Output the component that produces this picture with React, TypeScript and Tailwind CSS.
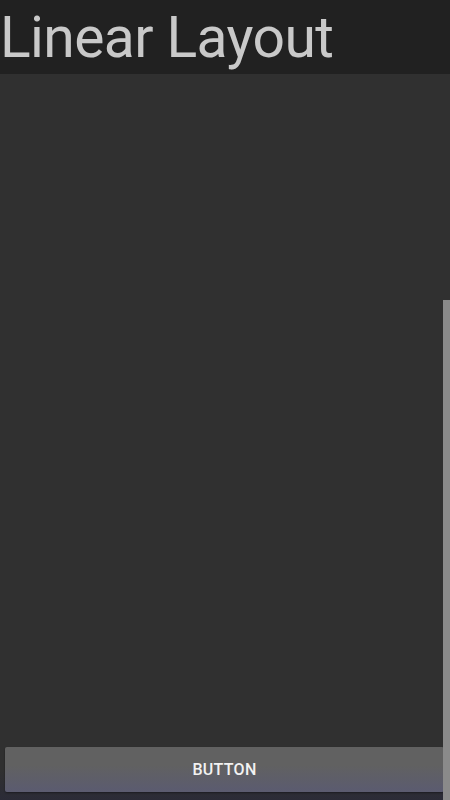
import React from "react";

export default function App() {
  return (
    <div className="relative flex h-[800px] w-[450px] flex-col overflow-hidden bg-[#303030]" style={{ fontFamily: "Roboto, 'Noto Sans', sans-serif" }}>
      <div className="flex h-[74px] items-center bg-[#212121]">
        <h1 className="mt-[1px] pl-[0px] text-[57px] font-normal leading-none tracking-[-0.6px] text-[#c9c9c9]">Linear Layout</h1>
      </div>
      <div className="flex flex-1 flex-col justify-end bg-gradient-to-b from-[#303030] from-[96%] to-[#2b2b37]">
        <button className="mb-[8px] ml-[5px] mr-[6px] h-[45px] rounded-[2px] bg-gradient-to-b from-[#616161] from-[40%] to-[#5b5b70] text-[16px] font-medium tracking-[0.3px] text-[#f2f2f2] shadow-[0_1px_2px_rgba(0,0,0,0.4)]">
          BUTTON
        </button>
      </div>
      <div className="absolute right-0 top-[300px] h-[500px] w-[7px] bg-[#8a8a8a]" />
    </div>
  );
}
